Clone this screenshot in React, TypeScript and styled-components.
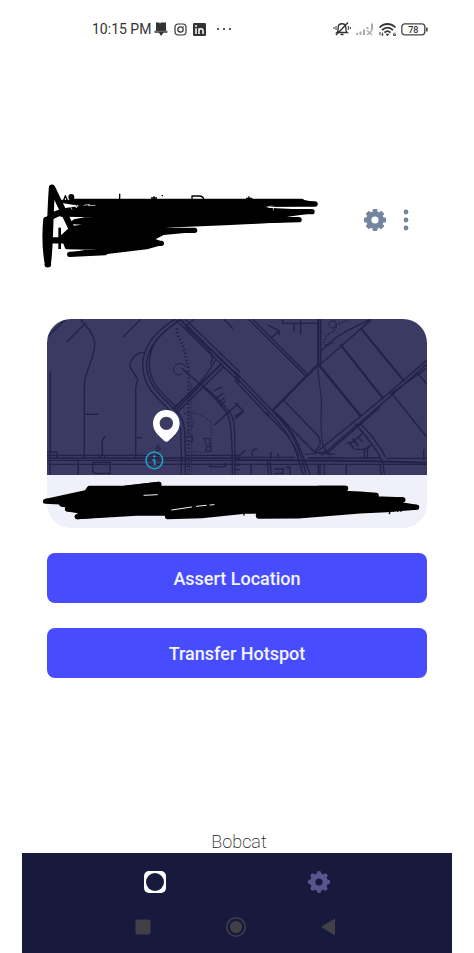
import React from "react";
import styled, { createGlobalStyle } from "styled-components";

const GlobalStyle = createGlobalStyle`
  * { box-sizing: border-box; }
  body { margin: 0; background: #fff; font-family: Roboto, "Liberation Sans", sans-serif; }
`;

const Screen = styled.main`
  display: flex;
  flex-direction: column;
  min-height: 100vh;
  padding: 0 22px;
`;

const StatusBar = styled.div`
  display: flex;
  justify-content: space-between;
  align-items: center;
  height: 58px;
  padding: 0 24px 0 70px;
  color: #333;
  font-size: 14px;
`;

const StatusGroup = styled.div<{ $gap: number }>`
  display: flex;
  align-items: center;
  gap: ${(p) => p.$gap}px;
`;

const Clock = styled.time`
  white-space: nowrap;
`;

const Icon = styled.svg`
  display: block;
  flex: none;
`;

const Content = styled.div`
  display: flex;
  flex-direction: column;
  flex: 1;
  padding: 116px 25px 0;
`;

const Header = styled.header`
  display: flex;
  align-items: flex-start;
  justify-content: space-between;
  height: 120px;
`;

const HeaderScribble = styled.svg`
  display: block;
  flex: none;
  margin: 1px 0 0 -12px;
`;

const HeaderActions = styled.div`
  display: flex;
  gap: 16px;
  padding: 34px 18px 0 0;
`;

const IconButton = styled.button`
  display: grid;
  place-items: center;
  padding: 0;
  border: 0;
  background: none;
  cursor: pointer;
`;

const Card = styled.section`
  position: relative;
  margin: 25px 0;
`;

const MapView = styled.svg`
  display: block;
  width: 100%;
  background: #3a3a62;
  border-radius: 24px 24px 0 0;
`;

const AddressBar = styled.div`
  height: 53px;
  background: #f0f0fb;
  border-radius: 0 0 24px 24px;
`;

const AddressScribble = styled.svg`
  position: absolute;
  left: -12px;
  bottom: -7px;
  width: calc(100% + 20px);
`;

const Actions = styled.div`
  display: grid;
  gap: 25px;
`;

const ActionButton = styled.button`
  height: 50px;
  padding-top: 2px;
  border: 0;
  border-radius: 8px;
  background: #474dff;
  color: #f4f4ff;
  font: 500 18px/24px Roboto, "Liberation Sans", sans-serif;
  cursor: pointer;
`;

const Maker = styled.p`
  margin: auto 0 0;
  padding-left: 4px;
  color: #222;
  font-size: 18px;
  font-weight: 200;
  line-height: 22px;
  text-align: center;
`;

const BottomBar = styled.footer`
  height: 100px;
  padding-top: 14px;
  background: #171a3d;
`;

const Tabs = styled.nav`
  display: flex;
  justify-content: space-between;
  padding: 0 121px 0 118px;
  height: 30px;
  align-items: center;
`;

const SystemKeys = styled.div`
  display: flex;
  justify-content: space-between;
  align-items: center;
  height: 24px;
  margin-top: 18px;
  padding: 0 113px 0 110px;
`;

function Gear({ color, size, round }: { color: string; size: number; round?: boolean }) {
  return (
    <Icon width={size} height={size} viewBox="0 0 24 24" aria-hidden="true">
      <circle cx="12" cy="12" r="6.2" fill="none" stroke={color} strokeWidth="5.2" />
      {[0, 45, 90, 135, 180, 225, 270, 315].map((a) => (
        <rect
          key={a}
          x={round ? 9.8 : 9.6}
          y={round ? 0.9 : 1}
          width={round ? 4.4 : 4.8}
          height="5"
          rx={round ? 2 : 1}
          fill={color}
          transform={`rotate(${a} 12 12)`}
        />
      ))}
    </Icon>
  );
}

function LeftStatusIcons() {
  return (
    <>
      <Icon width="14" height="16" viewBox="0 0 14 16" fill="#333" aria-hidden="true">
        <path d="M2 1.5h3l1 1 1-1h5v8.2h1.4v2H9.5L7 15l-2-3.3H.5v-2H2z" />
        <path d="M1 10.3h12" stroke="#999" strokeWidth=".6" />
      </Icon>
      <Icon width="13" height="13" viewBox="0 0 13 13" fill="none" stroke="#333" strokeWidth="1.2" aria-hidden="true">
        <rect x="1" y="1" width="11" height="11" rx="3.2" />
        <circle cx="6.5" cy="6.5" r="2.7" />
        <circle cx="9.6" cy="3.4" r=".5" fill="#333" stroke="none" />
      </Icon>
      <Icon width="13" height="13" viewBox="0 0 13 13" aria-hidden="true">
        <rect width="13" height="13" rx="1.2" fill="#333" />
        <path d="M3 5.2V11M6 11V5.2M6 7.8C6.2 5.2 10 5 10 7.8V11" fill="none" stroke="#fff" strokeWidth="1.5" />
        <circle cx="3" cy="3" r="1" fill="#fff" />
      </Icon>
      <Icon width="22" height="4" viewBox="0 0 22 4" fill="#333" aria-hidden="true">
        <circle cx="6" cy="2" r="1.1" />
        <circle cx="12" cy="2" r="1.1" />
        <circle cx="18" cy="2" r="1.1" />
      </Icon>
    </>
  );
}

function RightStatusIcons() {
  return (
    <>
      <Icon width="18" height="16" viewBox="0 0 18 16" fill="none" stroke="#333" strokeWidth="1.4" aria-hidden="true">
        <path d="M4 11.5c1.3-1 1.1-3 1.2-5C5.4 1.5 12.6 1.5 12.8 6.5c.1 2 0 4 1.3 5zM7.5 13.5h3M15 1.5 3 14" />
        <path d="M3 5v4M1 6v2M15.3 5v4M17.3 6v2" strokeWidth="1" />
      </Icon>
      <Icon width="19" height="14" viewBox="0 0 19 14" fill="none" stroke="#aaa" strokeWidth="2" aria-hidden="true">
        <path d="M2 13v-2M5.5 13V9.5M9 13V7.5M12.5 7V5M17 8V1.5" />
        <path d="m12 8.500 5 4.500m0-4.500L12 13" strokeWidth="1.3" />
      </Icon>
      <Icon width="19" height="15" viewBox="0 0 19 15" fill="none" stroke="#333" strokeWidth="1.8" aria-hidden="true">
        <path d="M1.5 5.500c4.500-4.700 11.500-4.700 16 0M4 8.200c3.300-3.300 7.700-3.300 11 0M6.500 10.600c2-1.900 4-1.900 6 0" />
        <path d="m7.500 11.700 2 2.500 2-2.500z" fill="#333" stroke="none" />
        <path d="M2 13.500v-3m-1 1 1-1 1 1M4.500 10.500v3m-1-1 1 1 1-1M17 10.500l-1.500 1.500v1.500h2V12h-2" strokeWidth=".8" />
      </Icon>
      <Icon width="27" height="13" viewBox="0 0 27 13" aria-hidden="true">
        <rect x=".8" y=".8" width="23" height="11" rx="3" fill="#fff" stroke="#444" strokeWidth="1.3" />
        <path d="M25.800 4.500v4" stroke="#444" strokeWidth="1.6" />
        <text x="12.3" y="9.8" textAnchor="middle" fontFamily="Roboto, sans-serif" fontSize="9" fontWeight="500" fill="#333">
          78
        </text>
      </Icon>
    </>
  );
}

function NameScribble() {
  return (
    <HeaderScribble
      width="290"
      height="100"
      viewBox="0 0 870 300"
      fill="none"
      stroke="#000"
      strokeLinecap="round"
      strokeLinejoin="round"
      role="img"
      aria-label="Hidden name"
    >
      <path strokeWidth="19" d="M39 268C32 230 30 180 34 135M38 268C46 220 44 130 51 38L111 163M34 140C55 108 110 104 200 95M55 196H90" />
      <path
        strokeWidth="10"
        fill="#000"
        d="M82 79H803L842 87 695 90V103L832 110 748 122 794 134 570 146 370 154 350 162 480 166 385 175 350 193 380 205 335 218 210 233 103 238 205 220 95 218 82 184 110 158 200 147 112 143 118 138 200 122 78 120 80 108 190 97Z"
      />
      <path strokeWidth="16" d="M110 79H800M695 87H840M690 110H831M600 139 792 134M350 166H479M340 205H379M104 238 210 233" />
      <path strokeWidth="4" strokeLinecap="butt" d="M85 79 91 62 98 79M254 56V76M357 64V78M348 69H366M382 60V64M471 76V63H492Q506 63 507 76M642 64V78M633 70H652" />
      <path strokeWidth="8" strokeLinecap="butt" d="M74 158V222" />
      <circle cx="109" cy="66" r="9" fill="#000" stroke="none" />
      <path strokeWidth="2" stroke="#fff" d="M104 92 111 103M120 90 124 99 128 91M147 91 164 88M160 92 180 91M695 96 711 93M715 94V105" />
    </HeaderScribble>
  );
}

function LocationMap() {
  return (
    <MapView viewBox="0 0 1140 468" role="img" aria-label="Map of the hotspot location">
      <g transform="translate(-21 -27)" fill="none" stroke="#222247" strokeWidth="4">
        <path d="M21 82 75 30M80 97 132 44M122 28C145 55 166 78 164 105C163 150 135 180 133 225V444M133 313H176M303 28 249 81" />
        <path d="M317 128C285 122 260 165 274 178L293 208C291 220 287 225 287 240V444M288 383H306M31 184V440" />
        <path d="M404 28C340 70 311 110 308 160C309 235 347 257 391 303C427 335 424 350 424 494M420 29C350 77 323 115 320 161C320 225 357 250 400 295C437 327 437 345 436 494M411 37C343 80 329 120 328 160C327 220 363 245 406 289" />
        <path d="M407 29 600 218M421 29 600 204M436 28 600 187M442 45 462 28M552 28 579 56" />
        <path d="M527 150C509 180 505 188 480 218L398 299M545 160 405 304M551 170 410 309M436 51C465 80 495 100 515 134Q520 145 511 164" />
        <path strokeWidth="3" d="M437 171C427 155 402 158 400 177C398 192 417 200 428 190" />
        <path d="M425 174C475 220 510 245 544 288C570 315 577 330 577 494M483 222C530 260 550 280 571 310C584 325 585 345 585 494" />
        <path d="M522 346 595 280M522 244C526 235 535 240 545 230M526 266 550 250M534 278 554 263M540 286 557 272" />
        <path strokeDasharray="4 7" strokeWidth="8" d="M410 55 415 80Q438 122 440 160Q448 175 446 210V494" />
        <path strokeDasharray="4 4" strokeWidth="3" d="M455 220V494M432 312C470 300 500 325 513 335V410C505 440 480 420 453 425M440 365C462 358 468 330 450 320C435 335 440 350 463 348" />
        <path strokeWidth="3" d="M436 379H458V393H439M498 423V410H513V425ZM501 410 492 385H509V410M356 403V418M350 405V425L364 414" />
        <path d="M21 444H600M21 436H365M22 451H600M436 436H600M22 463H600M21 426H50V444M30 451V494M115 451V494M158 457V485Q161 490 172 490H210V450M158 457H212M176 444 187 432 197 444M187 432V393L195 378M509 459V470H556V458M588 465H600M582 479H600" />
        <path strokeWidth="8" d="M421 29 600 204M400 297 545 162" opacity=".45" />
      </g>
      <g transform="translate(564 -27)" fill="none" stroke="#222247" strokeWidth="4">
        <path d="M41 28 212 198M53 28 216 191M100 46 132 62 108 85M132 62V75M143 28V40H248M177 40V68M197 28V73" />
        <path strokeWidth="7" d="M250 28V163L114 300M250 163 377 318" />
        <path d="M257 28V160M260 123C300 75 350 55 407 28M254 165 407 31" />
        <circle cx="293" cy="43" r="11" strokeDasharray="5 3" />
        <path strokeDasharray="6 4" d="M310 42 340 31M269 90 277 74 295 65 306 48M264 95 275 108 298 97" />
        <path strokeWidth="6" d="M378 56 508 214M316 103 444 265" />
        <path d="M575 151 445 263 250 422M575 163 450 273 266 431M575 175 465 253M435 292 273 433M545 187 575 222M470 250 575 381" />
        <path d="M0 185 112 302C155 350 190 385 213 494M0 199 103 307C145 352 175 380 204 494M0 211 91 309C145 360 172 385 192 440" />
        <path d="M114 300C145 350 165 320 225 494M145 270 247 375Q260 390 254 407L240 423M120 305 238 426 299 433" />
        <path strokeWidth="3" d="M247 165 259 270 258 350 264 411 290 444M240 423 263 436 273 411M210 434 246 430" />
        <path d="M360 340 392 378 430 430 444 459 448 494M375 340 408 375 443 425 450 440M344 401 384 370M364 393 336 400M383 396 367 379M370 408 353 387M357 417 345 400M359 418H388L407 406 397 417V445M388 418V445" />
        <path strokeWidth="6" d="M0 449 430 454 575 458" />
        <path d="M0 442H180M220 444H435M453 445H575M0 463H575M97 454 101 494M105 454 109 494M48 463V494M118 477H145V490H120M154 471H165V494M250 463V494M255 463V494M268 463V494M334 463V494M435 463 438 494M566 418V450" />
        <path d="M10 440 31 421M52 440V423L66 414M108 426V446M129 430V445M0 319 25 303 0 278M0 327 25 305" />
        <circle cx="97" cy="312" r="4" />
      </g>
      <circle cx="322" cy="424" r="25" fill="none" stroke="#20a4c3" strokeWidth="4.5" />
      <circle cx="322" cy="412" r="3.5" fill="#20a4c3" />
      <path d="M316 423H323V438" fill="none" stroke="#20a4c3" strokeWidth="5" />
      <path
        fill="#fff"
        fillRule="evenodd"
        d="M358 273C334 273 318 291 318 314C318 338 339 352 351 365Q358 371 365 365C377 352 398 338 398 314C398 291 382 273 358 273ZM358 293A20 20 0 1 1 358 333A20 20 0 1 1 358 293Z"
      />
    </MapView>
  );
}

function AddressMark() {
  return (
    <AddressScribble
      viewBox="0 0 1200 195"
      fill="#000"
      stroke="#000"
      strokeWidth="15"
      strokeLinecap="round"
      strokeLinejoin="round"
      role="img"
      aria-label="Hidden address"
    >
      <path d="M31 94 155 67 163 55H275L372 43 370 55H932L925 70 975 72 1024 76V86L1103 89 1080 101 1145 112 1055 119 975 123 790 138 670 139V123L630 124 500 137 397 140V129L305 130 127 140 150 125 97 117 110 107 80 103 88 97Z" />
      <path d="M270 54 371 43M850 55H932M1000 89H1104M1000 112H1145M98 117H150M126 140 230 132" fill="none" />
      <path d="M327 76 367 74M410 120 470 111M484 109 514 106M525 105 537 104" fill="none" stroke="#f0f0fb" strokeWidth="3" />
      <path d="M1067 119 1063 131M1078 117 1076 124M1088 118V124M1100 118 1098 124M627 127V135" strokeWidth="4" />
    </AddressScribble>
  );
}

export default function App() {
  return (
    <>
      <GlobalStyle />
      <Screen>
        <StatusBar>
          <StatusGroup $gap={3}>
            <Clock>10:15 PM</Clock>
            <StatusGroup $gap={6}>
              <LeftStatusIcons />
            </StatusGroup>
          </StatusGroup>
          <StatusGroup $gap={4}>
            <RightStatusIcons />
          </StatusGroup>
        </StatusBar>
        <Content>
          <Header>
            <NameScribble />
            <HeaderActions>
              <IconButton aria-label="Hotspot settings">
                <Gear color="#73859f" size={24} />
              </IconButton>
              <IconButton aria-label="More options">
                <Icon width="6" height="24" viewBox="0 0 6 24" fill="#73859f" aria-hidden="true">
                  <circle cx="3" cy="4" r="2.4" />
                  <circle cx="3" cy="12" r="2.4" />
                  <circle cx="3" cy="20" r="2.4" />
                </Icon>
              </IconButton>
            </HeaderActions>
          </Header>
          <Card>
            <LocationMap />
            <AddressBar />
            <AddressMark />
          </Card>
          <Actions>
            <ActionButton>Assert Location</ActionButton>
            <ActionButton>Transfer Hotspot</ActionButton>
          </Actions>
          <Maker>Bobcat</Maker>
        </Content>
        <BottomBar>
          <Tabs>
            <IconButton aria-label="Hotspots">
              <Icon width="30" height="30" viewBox="0 0 30 30" aria-hidden="true">
                <rect x="4" y="4" width="22" height="22" rx="5" fill="#fff" />
                <circle cx="15" cy="15" r="9" fill="#171a3d" />
              </Icon>
            </IconButton>
            <IconButton aria-label="Settings">
              <Gear color="#57568f" size={24} round />
            </IconButton>
          </Tabs>
          <SystemKeys>
            <IconButton aria-label="Recent apps">
              <Icon width="22" height="22" viewBox="0 0 22 22" aria-hidden="true">
                <rect x="3.5" y="3.5" width="15" height="15" rx="2" fill="#414045" />
              </Icon>
            </IconButton>
            <IconButton aria-label="Home">
              <Icon width="22" height="22" viewBox="0 0 22 22" aria-hidden="true">
                <circle cx="11" cy="11" r="9.3" fill="none" stroke="#414045" strokeWidth="1.5" />
                <circle cx="11" cy="11" r="6" fill="#414045" />
              </Icon>
            </IconButton>
            <IconButton aria-label="Back">
              <Icon width="22" height="22" viewBox="0 0 22 22" aria-hidden="true">
                <path d="M4 11 18 2.500v17z" fill="#414045" />
              </Icon>
            </IconButton>
          </SystemKeys>
        </BottomBar>
      </Screen>
    </>
  );
}
